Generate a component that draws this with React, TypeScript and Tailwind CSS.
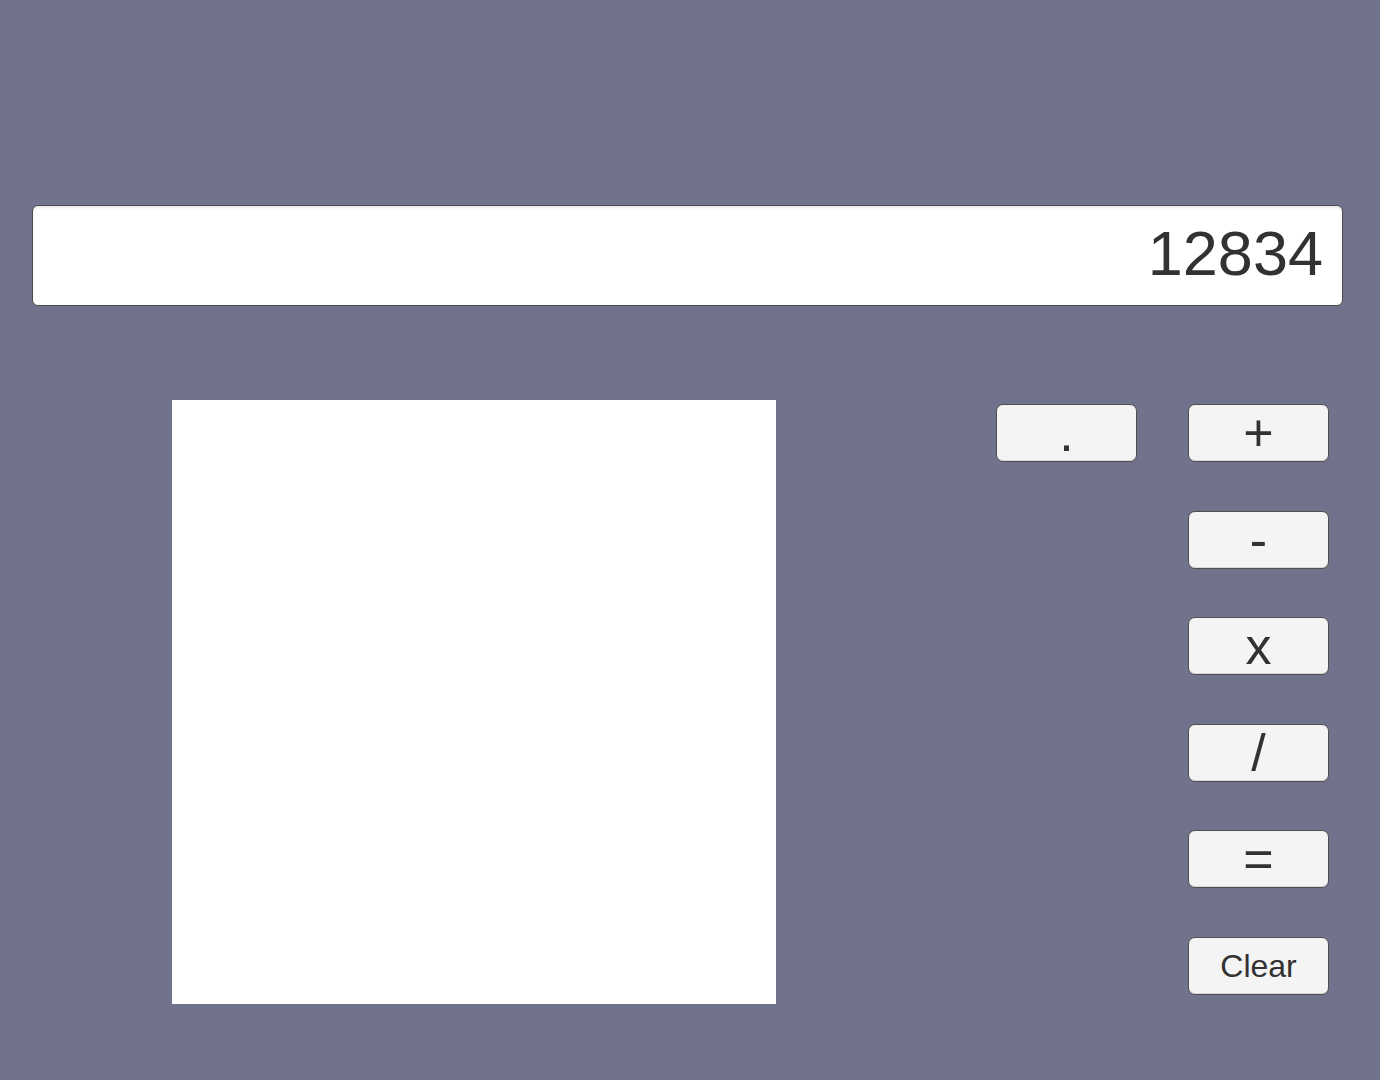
const OPS = ["+", "-", "x", "/", "=", "Clear"];

function Key({ label }: { label: string }) {
  const small = label === "Clear";
  return (
    <button
      className={`block w-[141px] h-[58px] bg-[#f4f4f4] border border-[#4f4f4f] rounded-[7px] shadow-[inset_0_-1px_0_#d8d8d8] text-[#323232] flex items-center justify-center ${
        small ? "text-[32px]" : "text-[52px]"
      }`}
      style={{ fontFamily: '"Liberation Sans", Arial, sans-serif', lineHeight: "58px" }}
    >
      {label}
    </button>
  );
}

export default function App() {
  return (
    <div className="w-[1380px] h-[1080px] bg-[#71728c] pt-[205px] overflow-hidden">
      <div
        className="ml-[32px] w-[1311px] h-[101px] bg-white border border-[#4a4a4a] rounded-[6px] shadow-[inset_0_2px_2px_rgba(0,0,0,0.08)] flex items-center justify-end pr-[19px] pb-[6px] text-[63px] text-[#323232]"
        style={{ fontFamily: '"Liberation Sans", Arial, sans-serif', lineHeight: "normal" }}
      >
        12834
      </div>

      <div className="flex mt-[94px]">
        <div className="ml-[172px] w-[604px] h-[604px] bg-white" />
        <div className="ml-[220px] mt-[4px] flex gap-x-[51px] items-start">
          <Key label="." />
          <div className="flex flex-col gap-y-[48.6px]">
            {OPS.map((op) => (
              <Key key={op} label={op} />
            ))}
          </div>
        </div>
      </div>
    </div>
  );
}
